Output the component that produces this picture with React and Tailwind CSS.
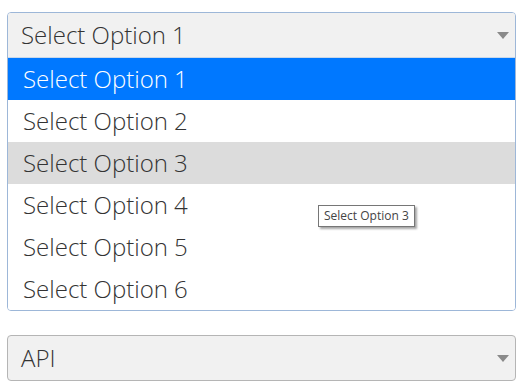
import React from "react";

const options = [
  "Select Option 1",
  "Select Option 2",
  "Select Option 3",
  "Select Option 4",
  "Select Option 5",
  "Select Option 6",
];

function Arrow() {
  return (
    <svg width="12" height="7" viewBox="0 0 12 7" className="shrink-0">
      <path d="M0 0 L12 0 L6 7 Z" fill="#8a8a8a" />
    </svg>
  );
}

export default function App() {
  return (
    <div
      className="w-[522px] h-[392px] bg-white pl-[7px] pt-[12px] text-[#333]"
      style={{ fontFamily: "'Open Sans', 'Noto Sans', sans-serif" }}
    >
      {/* open select */}
      <div className="relative w-[509px] rounded-[4px] border border-[#9db7d8] overflow-hidden">
        <div className="h-[45px] bg-[#f1f1f1] flex items-center justify-between pl-[13px] pr-[6px] border-b border-[#c9d8ea]">
          <span className="text-[24px] font-light">Select Option 1</span>
          <Arrow />
        </div>
        <ul className="bg-white">
          {options.map((o, i) => (
            <li
              key={o}
              className={
                "h-[42px] flex items-center pl-[15px] text-[24px] font-light " +
                (i === 0 ? "bg-[#0078ff] text-white" : i === 2 ? "bg-[#dcdcdc]" : "")
              }
            >
              {o}
            </li>
          ))}
        </ul>

        {/* tooltip */}
        <div className="absolute left-[310px] top-[192px] h-[22px] px-[5px] flex items-center bg-white border border-[#767676] text-[12px] text-[#444] shadow-[2px_2px_2px_rgba(0,0,0,0.35)]">
          Select Option 3
        </div>
      </div>

      {/* closed select */}
      <div className="mt-[24px] w-[509px] h-[46px] rounded-[4px] border border-[#b5b5b5] bg-[#f1f1f1] flex items-center justify-between pl-[13px] pr-[6px]">
        <span className="text-[24px] font-light">API</span>
        <Arrow />
      </div>
    </div>
  );
}
